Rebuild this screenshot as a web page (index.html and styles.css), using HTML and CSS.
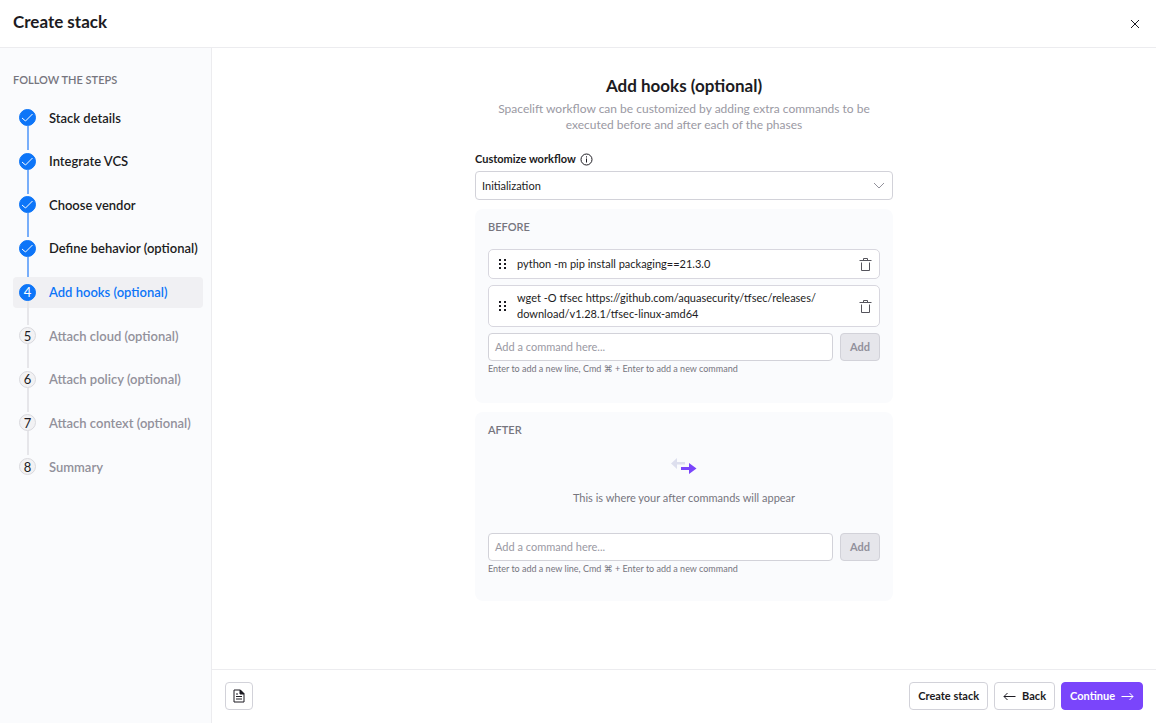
FILE: index.html
```html
<!DOCTYPE html>
<html lang="en">
<head>
    <meta charset="UTF-8">
    <meta name="viewport" content="width=device-width, initial-scale=1.0">
    <title>Create stack</title>
    <link rel="stylesheet" href="styles.css">
</head>
<body>

<header class="header">
    <h1 class="header-title">Create stack</h1>
    <button type="button" class="close-button" aria-label="Close">
        <svg width="10" height="10" viewBox="0 0 10 10"><path d="M1 1l8 8M9 1L1 9"/></svg>
    </button>
</header>

<div class="layout">
    <nav class="sidebar">
        <h2 class="caption">FOLLOW THE STEPS</h2>
        <ol class="steps">
            <li class="step done">
                <span class="step-mark"><svg width="17" height="17" viewBox="0 0 17 17"><path d="M3 9l3.500 3L13.500 5"/></svg></span>
                <span>Stack details</span>
            </li>
            <li class="step done">
                <span class="step-mark"><svg width="17" height="17" viewBox="0 0 17 17"><path d="M3 9l3.500 3L13.500 5"/></svg></span>
                <span>Integrate VCS</span>
            </li>
            <li class="step done">
                <span class="step-mark"><svg width="17" height="17" viewBox="0 0 17 17"><path d="M3 9l3.500 3L13.500 5"/></svg></span>
                <span>Choose vendor</span>
            </li>
            <li class="step done">
                <span class="step-mark"><svg width="17" height="17" viewBox="0 0 17 17"><path d="M3 9l3.500 3L13.500 5"/></svg></span>
                <span>Define behavior (optional)</span>
            </li>
            <li class="step current">
                <span class="step-mark">4</span>
                <span>Add hooks (optional)</span>
            </li>
            <li class="step">
                <span class="step-mark">5</span>
                <span>Attach cloud (optional)</span>
            </li>
            <li class="step">
                <span class="step-mark">6</span>
                <span>Attach policy (optional)</span>
            </li>
            <li class="step">
                <span class="step-mark">7</span>
                <span>Attach context (optional)</span>
            </li>
            <li class="step">
                <span class="step-mark">8</span>
                <span>Summary</span>
            </li>
        </ol>
    </nav>

    <div class="content">
        <main class="hooks">
            <h2 class="hooks-title">Add hooks (optional)</h2>
            <p class="hooks-text">Spacelift workflow can be customized by adding extra commands to be executed before and after each of the phases</p>

            <div class="field-label">
                <label for="phase">Customize workflow</label>
                <svg class="info-icon" width="13" height="13" viewBox="0 0 13 13"><circle cx="6.500" cy="6.500" r="5.500"/><path d="M6.500 5.500v4M6.500 3.300v1.200"/></svg>
            </div>
            <div class="select">
                <select id="phase">
                    <option>Initialization</option>
                    <option>Planning</option>
                    <option>Applying</option>
                </select>
                <svg class="select-arrow" width="12" height="7" viewBox="0 0 12 7"><path d="M1 1l5 5 5-5"/></svg>
            </div>

            <section class="card">
                <h3 class="caption">BEFORE</h3>
                <ul class="commands">
                    <li class="command">
                        <svg class="drag-icon" width="8" height="11" viewBox="0 0 8 11"><path d="M0 0h2v2H0zM5 0h2v2H5zM0 4h2v2H0zM5 4h2v2H5zM0 8h2v2H0zM5 8h2v2H5z"/></svg>
                        <span class="command-text">python -m pip install packaging==21.3.0</span>
                        <button type="button" class="delete-button" aria-label="Delete command">
                            <svg width="13" height="15" viewBox="0 0 13 15"><path d="M0.500 3.500h12M4.500 3.500v-2h4v2M2.500 5.500v8h8v-8"/></svg>
                        </button>
                    </li>
                    <li class="command">
                        <svg class="drag-icon" width="8" height="11" viewBox="0 0 8 11"><path d="M0 0h2v2H0zM5 0h2v2H5zM0 4h2v2H0zM5 4h2v2H5zM0 8h2v2H0zM5 8h2v2H5z"/></svg>
                        <span class="command-text">wget -O tfsec https://github.com/aquasecurity/tfsec/releases/<wbr>download/v1.28.1/tfsec-linux-amd64</span>
                        <button type="button" class="delete-button" aria-label="Delete command">
                            <svg width="13" height="15" viewBox="0 0 13 15"><path d="M0.500 3.500h12M4.500 3.500v-2h4v2M2.500 5.500v8h8v-8"/></svg>
                        </button>
                    </li>
                </ul>
                <form class="add-form">
                    <textarea rows="1" placeholder="Add a command here..." aria-label="Before command"></textarea>
                    <button type="button" class="button add-button" disabled>Add</button>
                </form>
                <p class="hint">Enter to add a new line, Cmd ⌘ + Enter to add a new command</p>
            </section>

            <section class="card">
                <h3 class="caption">AFTER</h3>
                <div class="empty">
                    <svg width="26" height="17" viewBox="0 0 26 17">
                        <path class="arrow-left" d="M0 5.500L6 0v4h8v2.500H6V11z"/>
                        <path class="arrow-right" d="M10 9h8V5l7.500 5.500L18 16v-4h-8z"/>
                    </svg>
                    <p>This is where your after commands will appear</p>
                </div>
                <form class="add-form">
                    <textarea rows="1" placeholder="Add a command here..." aria-label="After command"></textarea>
                    <button type="button" class="button add-button" disabled>Add</button>
                </form>
                <p class="hint">Enter to add a new line, Cmd ⌘ + Enter to add a new command</p>
            </section>
        </main>

        <footer class="footer">
            <button type="button" class="button docs-button" aria-label="Documentation">
                <svg width="12" height="14" viewBox="0 0 12 14"><path d="M1 1h6.500L11 4.500V13H1z"/><path class="fold" d="M7 1v4h4z"/><path d="M3 5h2M3 7.500h6M3 10h6"/></svg>
            </button>
            <button type="button" class="button">Create stack</button>
            <button type="button" class="button">
                <svg width="13" height="9" viewBox="0 0 13 9"><path d="M12.500 4.500H1M4.500 1L1 4.500 4.500 8"/></svg>
                Back
            </button>
            <button type="button" class="button primary">
                Continue
                <svg width="13" height="9" viewBox="0 0 13 9"><path d="M0.500 4.500H12M8.500 1L12 4.500 8.500 8"/></svg>
            </button>
        </footer>
    </div>
</div>

</body>
</html>
```
FILE: styles.css
```css
* {
    box-sizing: border-box;
}

body {
    margin: 0;
    min-height: 100vh;
    display: flex;
    flex-direction: column;
    font-family: Lato, "DejaVu Sans", sans-serif;
    font-size: 11px;
    line-height: 16px;
    color: #1c1b22;
    background-color: #fff;
}

h1, h2, h3, p, ul, ol {
    margin: 0;
    padding: 0;
    list-style: none;
}

button, select, textarea {
    font: inherit;
    color: inherit;
}

svg {
    display: block;
    flex: none;
    fill: none;
    stroke: currentColor;
}

.header {
    display: flex;
    justify-content: space-between;
    align-items: center;
    height: 48px;
    padding: 0 13px;
    border-bottom: 1px solid #ececef;
}

.header-title, .hooks-title {
    font-size: 17px;
    line-height: 22px;
    font-weight: 700;
}

.header-title {
    padding-bottom: 4px;
}

.close-button, .delete-button {
    display: flex;
    padding: 0;
    border: none;
    background: none;
    cursor: pointer;
}

.close-button {
    padding: 3px;
}

.layout {
    flex: 1;
    display: flex;
}

.sidebar {
    width: 212px;
    padding: 24px 8px 24px 13px;
    background-color: #fafbfd;
    border-right: 1px solid #ececef;
}

.caption {
    font-size: 11px;
    font-weight: 600;
    color: #76757e;
}

/* Steps */
.steps {
    display: flex;
    flex-direction: column;
    justify-content: space-between;
    height: 380px;
    margin-top: 14px;
}

.step {
    position: relative;
    display: flex;
    align-items: center;
    gap: 13px;
    height: 31px;
    padding-left: 6px;
    border-radius: 4px;
    font-size: 13px;
    font-weight: 600;
    color: #92919b;
}

.step::after {
    content: "";
    position: absolute;
    top: 24px;
    left: 14px;
    width: 2px;
    height: 24px;
    background-color: #e6e6ea;
}

.step:last-child::after {
    display: none;
}

.step-mark {
    display: flex;
    align-items: center;
    justify-content: center;
    width: 17px;
    height: 17px;
    border: 1px solid #d9d9de;
    border-radius: 50%;
    background-color: #f2f2f4;
    font-weight: 400;
    color: #1c1b22;
}

.done {
    color: #1c1b22;
}

.step.done::after {
    background-color: #78aefa;
}

.done .step-mark, .current .step-mark {
    border-color: #0d75f8;
    background-color: #0d75f8;
    color: #fff;
}

.current {
    background-color: #f0f0f3;
    color: #0d75f8;
}

/* Content */
.content {
    flex: 1;
    display: flex;
    flex-direction: column;
}

.hooks {
    flex: 1;
    width: 100%;
    max-width: 418px;
    margin: 0 auto;
    padding-top: 27px;
}

.hooks-title {
    text-align: center;
}

.hooks-text {
    padding: 4px 8px 0;
    font-size: 12px;
    text-align: center;
    color: #9a99a3;
}

.field-label {
    display: flex;
    align-items: center;
    gap: 4px;
    margin-top: 18px;
    font-weight: 700;
}

.select {
    position: relative;
    margin-top: 4px;
}

.select select {
    display: block;
    width: 100%;
    height: 29px;
    padding: 0 6px;
    border: 1px solid #d2d2d9;
    border-radius: 4px;
    background-color: #fff;
    appearance: none;
}

.select-arrow {
    position: absolute;
    top: 11px;
    right: 8px;
    color: #92919b;
    pointer-events: none;
}

.card {
    margin-top: 9px;
    padding: 10px 13px 26px;
    border-radius: 8px;
    background-color: #fafbfd;
}

.card:last-child {
    padding-bottom: 24px;
}

.commands {
    display: flex;
    flex-direction: column;
    gap: 6px;
    margin: 14px 0 6px;
}

.command {
    display: flex;
    align-items: center;
    gap: 10px;
    padding: 4px 7px 4px 10px;
    min-height: 30px;
    border: 1px solid #d8d7df;
    border-radius: 5px;
    background-color: #fff;
}

.drag-icon {
    fill: #1c1b22;
    stroke: none;
}

.command-text {
    flex: 1;
}

.delete-button {
    color: #55545c;
}

.add-form {
    display: flex;
    gap: 7px;
}

.add-form textarea {
    flex: 1;
    height: 28px;
    padding: 5px 6px;
    border: 1px solid #d2d2d9;
    border-radius: 4px;
    background-color: #fff;
    resize: none;
    overflow: hidden;
}

.add-form textarea::placeholder {
    color: #9a99a3;
}

.hint {
    font-size: 9px;
    color: #76757e;
}

.empty {
    display: flex;
    flex-direction: column;
    align-items: center;
    gap: 15px;
    padding: 20px 0 27px;
    color: #76757e;
}

.arrow-left {
    fill: #dddfee;
    stroke: none;
}

.arrow-right {
    fill: #7a45fb;
    stroke: none;
}

/* Footer and buttons */
.footer {
    display: flex;
    align-items: center;
    gap: 6px;
    padding: 12px 13px 13px;
    border-top: 1px solid #ececef;
}

.button {
    display: flex;
    align-items: center;
    justify-content: center;
    gap: 6px;
    height: 28px;
    padding: 0 8px;
    border: 1px solid #d2d2d9;
    border-radius: 4px;
    background-color: #fff;
    font-weight: 700;
    cursor: pointer;
}

.add-button {
    width: 40px;
    background-color: #e6e6eb;
    color: #92919b;
    cursor: default;
}

.docs-button {
    width: 28px;
    padding: 0;
    margin-right: auto;
}

.fold {
    fill: currentColor;
}

.primary {
    border-color: #7a45fb;
    background-color: #7a45fb;
    color: #fff;
}
```
